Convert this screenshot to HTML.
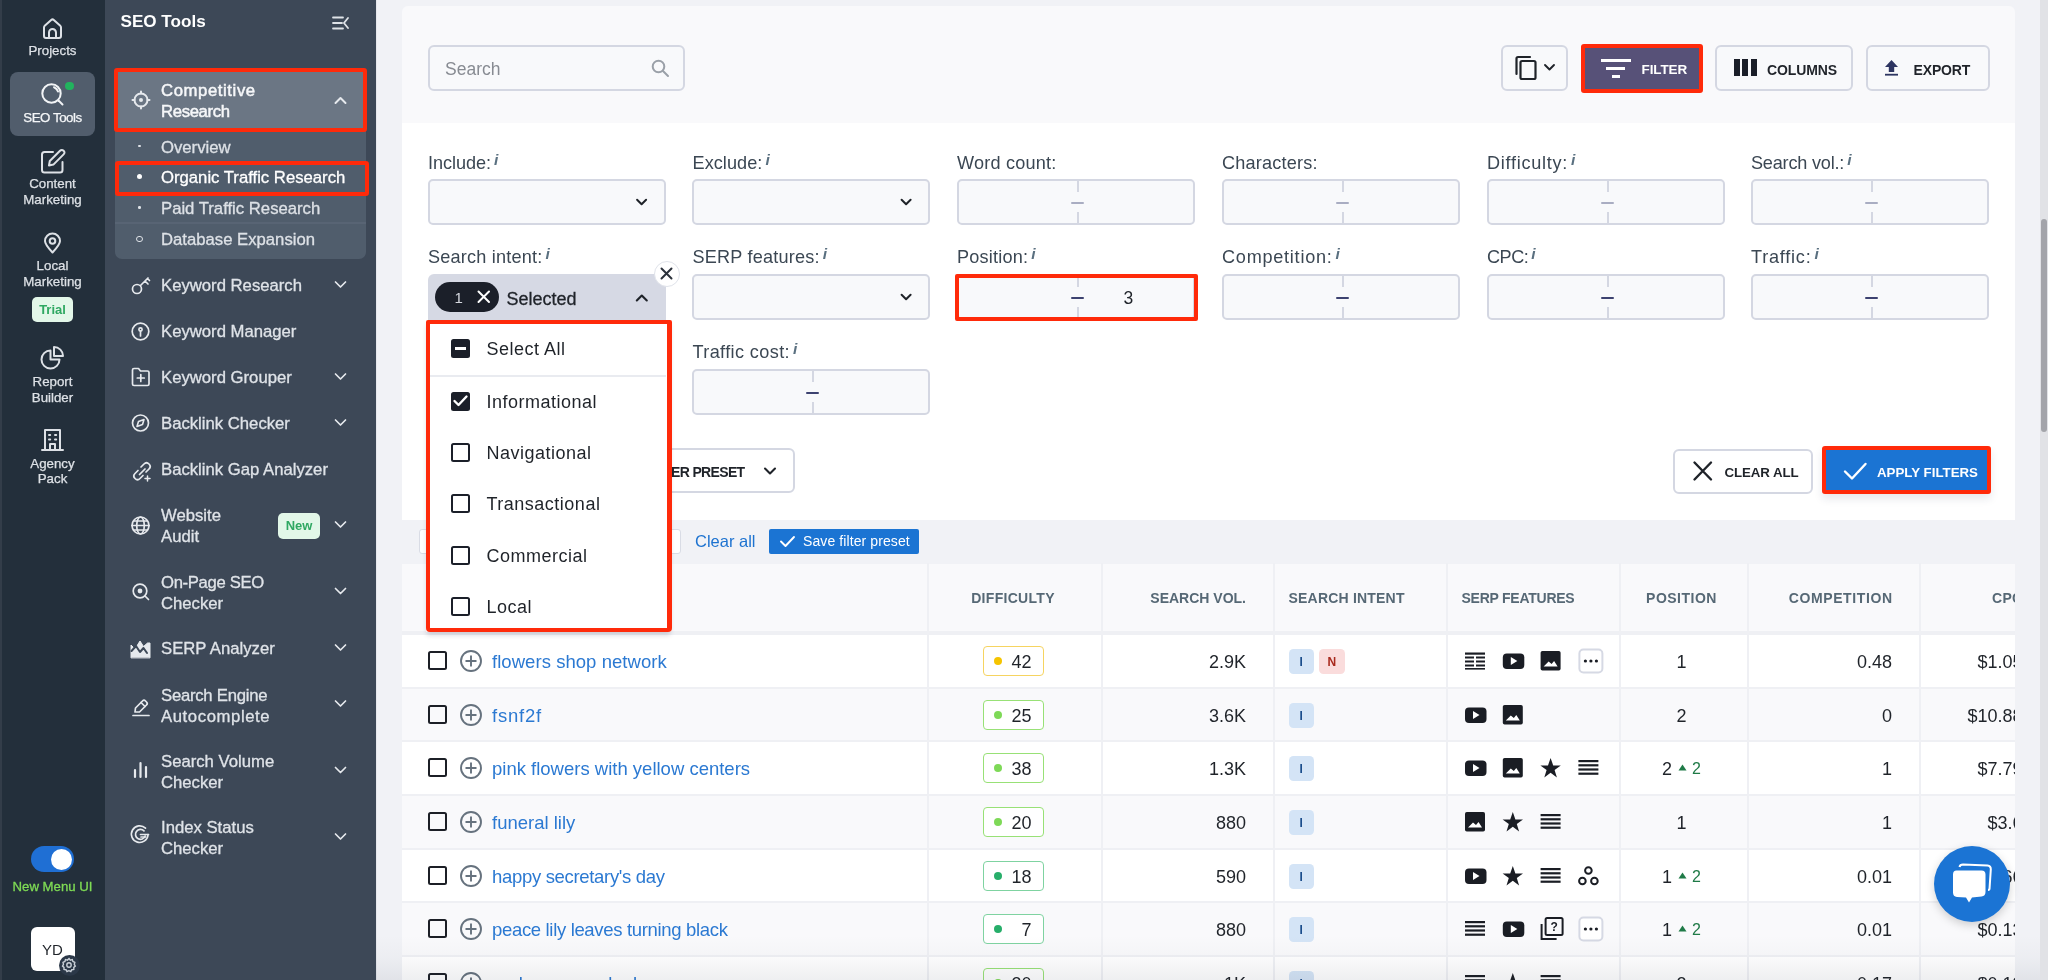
<!DOCTYPE html>
<html><head><meta charset="utf-8">
<style>
*{box-sizing:border-box;margin:0;padding:0}
html,body{width:2048px;height:980px;overflow:hidden;background:#f1f2f6;}
body{will-change:transform;font-family:"Liberation Sans",sans-serif}
.a{position:absolute}
svg{position:absolute;overflow:visible}
/* rail */
#rail{left:0;top:0;width:105px;height:980px;background:#232f3b}
.rl{position:absolute;left:0;width:105px;text-align:center;color:#dde1e6;font-size:13.3px;line-height:15.6px;white-space:nowrap;-webkit-text-stroke:0.25px currentColor}
/* panel */
#panel{left:105px;top:0;width:271px;height:980px;background:#3d4857}
.nv{position:absolute;left:161px;margin-top:2px;color:#dfe3e8;font-size:16.7px;line-height:20.5px;white-space:nowrap;-webkit-text-stroke:0.3px currentColor}
.chev{position:absolute;left:335px;width:11px;height:6px}
/* main */
#card{left:402px;top:6px;width:1613px;height:1000px;background:#fff;border-radius:6px 6px 0 0;overflow:hidden}
.lbl{position:absolute;margin-top:1px;color:#3b4753;font-size:18.1px;letter-spacing:0.2px;white-space:nowrap}
.lbl i{font-style:italic;font-weight:bold;font-size:15.5px;position:absolute;top:-3px;margin-left:3px;color:#5a7080;letter-spacing:0}
.inp{position:absolute;width:238px;height:46px;border:2px solid #d4d7e2;border-radius:5px;background:#f8f9fb}
.rng:before{content:"";position:absolute;left:117.5px;top:0;width:2px;height:11px;background:#d4d7e2}
.rng:after{content:"";position:absolute;left:117.5px;bottom:0;width:2px;height:11.5px;background:#d4d7e2}
.rng b{position:absolute;left:112px;top:21px;width:13px;height:2px;border-radius:1px;background:#3d4270}
.r1 b{background:#a9adc2}
.btn{position:absolute;border:2px solid #d4d7e2;border-radius:6px;background:#f8f9fb;color:#1f2329;font-size:14px;font-weight:bold;white-space:nowrap}
.red{position:absolute;border:4px solid #ff2a0a;border-radius:3px}
.th{position:absolute;top:589px;color:#566875;font-size:14px;font-weight:bold;letter-spacing:0.3px;white-space:nowrap}
.row{position:absolute;left:402px;width:1613px;height:52px}
.sep{position:absolute;top:563px;width:2px;height:430px;background:#eef0f4}
</style></head><body>

<!-- ===== LEFT RAIL ===== -->
<div id="rail" class="a"></div>
<div class="a" style="left:0;top:0;width:2px;height:980px;background:#333d49"></div>


<!-- rail items -->
<svg style="left:0;top:0" width="105" height="980" fill="none" stroke="#dde1e6" stroke-width="2" stroke-linecap="round" stroke-linejoin="round">
  <!-- house -->
  <path d="M44 27.5 Q44 26.5 45 25.6 L51.2 20 Q52.5 18.8 53.8 20 L60 25.6 Q61 26.5 61 27.5 V36 Q61 38 59 38 H46 Q44 38 44 36 Z"/>
  <path d="M49 38 V32.5 A3.5 3.5 0 0 1 56 32.5 V38"/>
</svg>
<div class="a" style="left:10px;top:72px;width:85px;height:64px;background:#515d6c;border-radius:8px"></div>
<svg style="left:0;top:0" width="105" height="200" fill="none" stroke="#f2f4f6" stroke-width="2" stroke-linecap="round">
  <circle cx="51.5" cy="93.5" r="9.2"/>
  <path d="M58.5 100.5 L62.5 104.5"/>
  <path d="M54 87.2 A6.5 6.5 0 0 1 58 91.5"/>
</svg>
<div class="a" style="left:65px;top:81.5px;width:8.6px;height:8.6px;border-radius:50%;background:#22b35e"></div>
<div class="rl" style="top:43px">Projects</div>
<div class="rl" style="top:110.2px;color:#f4f6f8;letter-spacing:-0.45px">SEO Tools</div>
<svg style="left:0;top:0" width="105" height="500" fill="none" stroke="#dde1e6" stroke-width="2" stroke-linecap="round" stroke-linejoin="round">
  <!-- content: square with pencil -->
  <path d="M53 152 H44.5 Q42 152 42 154.5 V170 Q42 172.5 44.5 172.5 H60 Q62.5 172.5 62.5 170 V162"/>
  <path d="M49 165.5 L49.8 161 L60 150.8 Q61.8 149 63.6 150.8 Q65.4 152.6 63.6 154.4 L53.4 164.6 Z"/>
  <!-- local pin -->
  <path d="M52.5 252.5 Q45 244.5 45 241 A7.5 7.5 0 0 1 60 241 Q60 244.5 52.5 252.5 Z"/>
  <circle cx="52.5" cy="241" r="2.8"/>
  <!-- report pie -->
  <path d="M50.5 350.5 A9 9 0 1 0 59.5 359.5 H50.5 Z"/>
  <path d="M54 347 A9 9 0 0 1 63 356 H54 Z"/>
  <!-- agency building -->
  <path d="M42 450 H63"/>
  <path d="M45 450 V430 H60 V450"/>
  <path d="M50 450 V444 H55 V450"/>
  <path d="M49 435 h1.2 M55 435 h1.2 M49 439.5 h1.2 M55 439.5 h1.2" stroke-width="2"/>
</svg>
<div class="rl" style="top:176px">Content<br>Marketing</div>
<div class="rl" style="top:258.4px">Local<br>Marketing</div>
<div class="a" style="left:32px;top:297px;width:41px;height:25px;border-radius:5px;background:#e3f7e9;color:#2fa862;font-size:13px;font-weight:bold;text-align:center;line-height:25px">Trial</div>
<div class="rl" style="top:374px">Report<br>Builder</div>
<div class="rl" style="top:455.6px">Agency<br>Pack</div>
<!-- toggle -->
<div class="a" style="left:30.5px;top:846px;width:43.5px;height:26px;border-radius:13px;background:#1f6fd4"></div>
<div class="a" style="left:51px;top:848.5px;width:21px;height:21px;border-radius:50%;background:#fff"></div>
<div class="a" style="left:0;top:878.8px;width:105px;text-align:center;color:#7fdc55;font-size:13.2px;line-height:15.6px;-webkit-text-stroke:0.3px #7fdc55;white-space:nowrap">New Menu UI</div>
<!-- avatar -->
<div class="a" style="left:30.5px;top:926.5px;width:44px;height:44px;border-radius:6px;background:#fff;color:#1f2329;font-size:15px;text-align:center;line-height:46px">YD</div>
<div class="a" style="left:58.5px;top:954.5px;width:21px;height:21px;border-radius:50%;background:#2b3848"></div>
<svg style="left:0;top:0" width="105" height="980" fill="none" stroke="#c9d0d8" stroke-width="1.4">
  <circle cx="69" cy="965" r="2.2"/>
  <path d="M69 958.5 l1.3 1.6 2-0.6 0.6 2 1.9 0.9 -0.5 2 1 1.7 -1.5 1.3 0 2 -2 0.3 -1 1.8 -1.9-0.8 -1.9 0.8 -1-1.8 -2-0.3 0-2 -1.5-1.3 1-1.7 -0.5-2 1.9-0.9 0.6-2 2 0.6 Z"/>
</svg>


<!-- ===== PANEL ===== -->
<div id="panel" class="a"></div>
<div class="a" style="left:120.5px;top:12px;color:#fff;font-size:17.1px;font-weight:bold;white-space:nowrap">SEO Tools</div>
<svg style="left:0;top:0" width="380" height="60" fill="none" stroke="#dfe3e8" stroke-width="1.8" stroke-linecap="round">
  <path d="M333 17.5 H343 M333 23 H342 M333 28.5 H343 M348 18 L344 23 L348 28"/>
</svg>
<!-- competitive research -->
<div class="a" style="left:115px;top:131px;width:251px;height:128px;background:#505d6c;border-radius:0 0 7px 7px"></div>
<div class="a" style="left:117px;top:71px;width:247px;height:57px;background:#6b7684"></div>
<div class="red" style="left:113.5px;top:67.5px;width:253px;height:64px"></div>
<div class="a" style="left:115px;top:222px;width:251px;height:1.5px;background:#586474"></div>
<svg style="left:0;top:0" width="380" height="980" fill="none" stroke="#e6e9ed" stroke-width="2" stroke-linecap="round" stroke-linejoin="round">
  <circle cx="141" cy="100" r="6.5"/>
  <circle cx="141" cy="100" r="2" fill="#e6e9ed" stroke="none"/>
  <path d="M141 91.5 V93.5 M141 106.5 V108.5 M132.5 100 H134.5 M147.5 100 H149.5"/>
  <path d="M335.5 103 L340.5 98 L345.5 103"/>
</svg>
<div class="nv" style="top:79px;color:#f6f7f9;-webkit-text-stroke:0.5px #f6f7f9"><span style="letter-spacing:0.6px">Competitive</span><br><span style="letter-spacing:-0.35px">Research</span></div>
<div class="a" style="left:138.2px;top:144.6px;width:2.4px;height:2.4px;border-radius:50%;background:#dfe3e8"></div>
<div class="nv" style="top:136px;color:#dde1e6">Overview</div>
<div class="red" style="left:114.7px;top:161.4px;width:254px;height:35px"></div>
<div class="a" style="left:137px;top:174.2px;width:5px;height:5px;border-radius:50%;background:#fff"></div>
<div class="nv" style="top:166px;color:#fff">Organic Traffic Research</div>
<div class="a" style="left:138.2px;top:206.4px;width:2.4px;height:2.4px;border-radius:50%;background:#dfe3e8"></div>
<div class="nv" style="top:197px;color:#dde1e6">Paid Traffic Research</div>
<div class="a" style="left:136px;top:235.5px;width:6.5px;height:6.5px;border-radius:50%;border:1.4px solid #dfe3e8"></div>
<div class="nv" style="top:228px;color:#dde1e6">Database Expansion</div>

<div class="nv" style="top:274px">Keyword Research</div>
<div class="nv" style="top:320px">Keyword Manager</div>
<div class="nv" style="top:366px">Keyword Grouper</div>
<div class="nv" style="top:412px">Backlink Checker</div>
<div class="nv" style="top:458px">Backlink Gap Analyzer</div>
<div class="nv" style="top:504px">Website<br>Audit</div>
<div class="a" style="left:278px;top:513px;width:42px;height:25.5px;border-radius:5px;background:#e2f7e8;color:#2fa862;font-size:13px;font-weight:bold;text-align:center;line-height:25.5px">New</div>
<div class="nv" style="top:571px"><span style="letter-spacing:-0.35px">On-Page SEO</span><br>Checker</div>
<div class="nv" style="top:637px">SERP Analyzer</div>
<div class="nv" style="top:684px"><span style="letter-spacing:-0.25px">Search Engine</span><br><span style="letter-spacing:0.6px">Autocomplete</span></div>
<div class="nv" style="top:750px">Search Volume<br>Checker</div>
<div class="nv" style="top:816px">Index Status<br>Checker</div>

<svg style="left:0;top:0" width="380" height="980" fill="none" stroke="#e6e9ed" stroke-width="1.7" stroke-linecap="round" stroke-linejoin="round">
  <!-- chevrons down -->
  <path d="M335.5 282 L340.5 287 L345.5 282"/>
  <path d="M335.5 374 L340.5 379 L345.5 374"/>
  <path d="M335.5 420 L340.5 425 L345.5 420"/>
  <path d="M335.5 522 L340.5 527 L345.5 522"/>
  <path d="M335.5 588.5 L340.5 593.5 L345.5 588.5"/>
  <path d="M335.5 645 L340.5 650 L345.5 645"/>
  <path d="M335.5 701 L340.5 706 L345.5 701"/>
  <path d="M335.5 767.5 L340.5 772.5 L345.5 767.5"/>
  <path d="M335.5 834 L340.5 839 L345.5 834"/>
  <!-- key -->
  <circle cx="137" cy="289" r="4.5"/>
  <path d="M140.5 285.5 L148 278 M145 281 L148 284 M147.5 278.5 L149.5 280.5"/>
  <!-- keyword manager -->
  <circle cx="140.5" cy="331.5" r="8.3"/>
  <circle cx="140.5" cy="329.5" r="1.6"/>
  <path d="M140.5 331 V336"/>
  <!-- grouper folder -->
  <path d="M132.5 370 Q132.5 368.5 134 368.5 H138.5 L140.5 371 H147.5 Q149 371 149 372.5 V384 Q149 385.5 147.5 385.5 H134 Q132.5 385.5 132.5 384 Z"/>
  <path d="M140.8 374.5 V381.5 M137.3 378 H144.3"/>
  <!-- backlink checker compass -->
  <circle cx="140.5" cy="423" r="8"/>
  <path d="M137 426.5 L138.5 421.5 L144 419.5 L142.5 424.5 Z" stroke-width="1.6"/>
  <!-- gap analyzer link -->
  <path d="M138 470.5 L135 473.5 Q132.5 476 135 478.5 Q137.5 481 140 478.5 L143 475.5"/>
  <path d="M141 467 L144 464 Q146.5 461.5 149 464 Q151.5 466.5 149 469 L146 472"/>
  <path d="M139.5 474.5 L145 469"/>
  <path d="M147.5 476 V481 M145 478.5 H150" stroke-width="1.5"/>
  <!-- globe -->
  <circle cx="140.5" cy="525.5" r="8.5"/>
  <path d="M132 525.5 H149 M133.5 521 H147.5 M133.5 530 H147.5"/>
  <ellipse cx="140.5" cy="525.5" rx="3.8" ry="8.5"/>
  <!-- on-page seo -->
  <circle cx="140" cy="591" r="6.8"/>
  <circle cx="140" cy="591" r="2.4" fill="#e6e9ed" stroke="none"/>
  <path d="M145 596 L148.5 599.5"/>
  <!-- serp analyzer -->
  <path d="M131 657.5 V645 L135 649 L140 641 L143.5 646.5 L147.5 643 H150 V657.5 Z" fill="#e6e9ed" stroke-width="1"/>
  <path d="M131.5 651 L136 646 L140 652 L143.5 648 L147 653" stroke="#3d4857" stroke-width="2"/>
  <!-- search engine autocomplete pencil -->
  <path d="M133 715.5 H149"/>
  <path d="M135 712 L135.5 708 L142.5 701 Q144 699.5 145.5 701 L146.5 702 Q148 703.5 146.5 705 L139.5 712 Z"/>
  <path d="M141 702.5 L145 706.5"/>
  <!-- search volume bars -->
  <path d="M135 770 V777 M140.5 763 V777 M146 767 V777" stroke-width="2.2"/>
  <!-- google G -->
  <path d="M148 834.5 A8.3 8.3 0 1 1 145.5 828.2"/>
  <path d="M145.2 836 A5 5 0 1 1 144 830.8"/>
  <path d="M140.5 834.5 H148.5 M141 837 H145.5"/>
</svg>


<!-- ===== MAIN ===== -->
<div class="a" style="left:376px;top:0;width:1px;height:980px;background:#e6e7ec"></div>
<div class="a" style="left:402px;top:6px;width:1613px;height:117px;background:#f9f9fb;border-radius:6px 6px 0 0"></div>
<div class="a" style="left:402px;top:123px;width:1613px;height:397px;background:#fff"></div>
<!-- scrollbar -->
<div class="a" style="left:2040px;top:0;width:8px;height:980px;background:#e1e2e6"></div>
<div class="a" style="left:2041px;top:219px;width:6px;height:213px;border-radius:3px;background:#a3a4aa"></div>

<!-- search -->
<div class="a" style="left:428px;top:45px;width:257px;height:46px;border:2px solid #d4d7e2;border-radius:6px;background:#f8f9fb"></div>
<div class="a" style="left:445px;top:60.4px;color:#878b92;font-size:17.5px;line-height:18px">Search</div>
<svg style="left:0;top:0" width="2048" height="140" fill="none" stroke="#9aa0a8" stroke-width="2" stroke-linecap="round">
  <circle cx="658.5" cy="66.5" r="5.8"/>
  <path d="M663 71 L668 76"/>
</svg>
<!-- copy btn -->
<div class="btn" style="left:1501px;top:45px;width:67px;height:46px"></div>
<svg style="left:0;top:0" width="2048" height="140" fill="none" stroke="#1f2329" stroke-width="2.2" stroke-linecap="round" stroke-linejoin="round">
  <path d="M1516.5 74 V58.5 Q1516.5 57 1518 57 H1530"/>
  <rect x="1520.5" y="61" width="15" height="18" rx="1.6"/>
  <path d="M1545 65 L1549.5 69.5 L1554 65" stroke-width="1.9"/>
</svg>
<!-- filter btn -->
<div class="a" style="left:1581px;top:44px;width:122px;height:48.5px;background:#575178;border:4px solid #ff2a0a;border-radius:3px"></div>
<div class="a" style="left:1601px;top:58.5px;width:29.5px;height:3.5px;background:#fff"></div>
<div class="a" style="left:1606px;top:66.5px;width:19px;height:3.5px;background:#fff"></div>
<div class="a" style="left:1612px;top:74.5px;width:8px;height:3.5px;background:#fff"></div>
<div class="a" style="left:1641.5px;top:62.5px;color:#fff;font-size:13.5px;font-weight:bold;line-height:14px;letter-spacing:-0.1px">FILTER</div>
<!-- columns -->
<div class="btn" style="left:1715px;top:45px;width:137.5px;height:46px"></div>
<div class="a" style="left:1734px;top:59px;width:6px;height:16.5px;background:#1a1e28"></div>
<div class="a" style="left:1742px;top:59px;width:6px;height:16.5px;background:#1a1e28"></div>
<div class="a" style="left:1750.5px;top:59px;width:6px;height:16.5px;background:#1a1e28"></div>
<div class="a" style="left:1767px;top:62.5px;color:#1f2329;font-size:14px;font-weight:bold;line-height:14px;letter-spacing:-0.1px">COLUMNS</div>
<!-- export -->
<div class="btn" style="left:1866px;top:45px;width:123.5px;height:46px"></div>
<svg style="left:0;top:0" width="2048" height="140">
  <path d="M1891.5 60 L1898 67 H1894.2 V72 H1888.8 V67 H1885 Z" fill="#2d3561"/>
  <rect x="1885" y="73.8" width="13" height="1.8" fill="#2d3561"/>
</svg>
<div class="a" style="left:1913.5px;top:62.5px;color:#1f2329;font-size:14px;font-weight:bold;line-height:14px;letter-spacing:-0.15px">EXPORT</div>

<!-- filters -->
<div class="lbl" style="left:428px;top:153.1px;line-height:18.4px;letter-spacing:-0.04px">Include:<i>i</i></div>
<div class="inp" style="left:428px;top:179px"></div>
<svg style="left:0;top:0" width="2048" height="500" fill="none" stroke="#1f2329" stroke-width="2" stroke-linecap="round" stroke-linejoin="round"><path d="M637.1 199.8 L641.6 204.2 L646.1 199.8"/></svg>
<div class="lbl" style="left:692.5px;top:153.1px;line-height:18.4px;letter-spacing:0.06px">Exclude:<i>i</i></div>
<div class="inp" style="left:692px;top:179px"></div>
<svg style="left:0;top:0" width="2048" height="500" fill="none" stroke="#1f2329" stroke-width="2" stroke-linecap="round" stroke-linejoin="round"><path d="M901.6 199.8 L906.1 204.2 L910.6 199.8"/></svg>
<div class="lbl" style="left:957px;top:153.1px;line-height:18.4px">Word count:</div>
<div class="inp rng r1" style="left:957px;top:179px"><b></b></div>
<div class="lbl" style="left:1222px;top:153.1px;line-height:18.4px">Characters:</div>
<div class="inp rng r1" style="left:1222px;top:179px"><b></b></div>
<div class="lbl" style="left:1487px;top:153.1px;line-height:18.4px;letter-spacing:0.72px">Difficulty:<i>i</i></div>
<div class="inp rng r1" style="left:1487px;top:179px"><b></b></div>
<div class="lbl" style="left:1751px;top:153.1px;line-height:18.4px;letter-spacing:-0.2px">Search vol.:<i>i</i></div>
<div class="inp rng r1" style="left:1751px;top:179px"><b></b></div>
<div class="lbl" style="left:428px;top:247.4px;line-height:18.4px">Search intent:<i>i</i></div>
<div class="lbl" style="left:692.5px;top:247.4px;line-height:18.4px">SERP features:<i>i</i></div>
<div class="inp" style="left:692px;top:274px"></div>
<svg style="left:0;top:0" width="2048" height="500" fill="none" stroke="#1f2329" stroke-width="2" stroke-linecap="round" stroke-linejoin="round"><path d="M901.6 294.8 L906.1 299.2 L910.6 294.8"/></svg>
<div class="lbl" style="left:957px;top:247.4px;line-height:18.4px">Position:<i>i</i></div>
<div class="lbl" style="left:1222px;top:247.4px;line-height:18.4px;letter-spacing:0.75px">Competition:<i>i</i></div>
<div class="inp rng" style="left:1222px;top:274px"><b></b></div>
<div class="lbl" style="left:1487px;top:247.4px;line-height:18.4px;letter-spacing:-0.5px">CPC:<i>i</i></div>
<div class="inp rng" style="left:1487px;top:274px"><b></b></div>
<div class="lbl" style="left:1751px;top:247.4px;line-height:18.4px;letter-spacing:0.77px">Traffic:<i>i</i></div>
<div class="inp rng" style="left:1751px;top:274px"><b></b></div>
<div class="lbl" style="left:692.5px;top:342.0px;line-height:18.4px;letter-spacing:0.38px">Traffic cost:<i>i</i></div>
<div class="inp rng" style="left:692px;top:369px"><b></b></div>
<!-- position box -->
<div class="inp rng" style="left:957px;top:274px"><b></b></div>
<div class="a" style="left:1123.5px;top:290px;color:#1f2329;font-size:17.5px;line-height:17.5px">3</div>
<div class="red" style="left:955px;top:273.5px;width:242.5px;height:47.5px;border-radius:2px"></div>
<!-- preset btn -->
<div class="btn" style="left:430px;top:448.4px;width:364.5px;height:45px;background:#fff"></div>
<div class="a" style="left:544px;top:464.7px;width:200.5px;text-align:right;color:#1f2329;font-size:14px;font-weight:bold;line-height:14px;letter-spacing:-0.65px">SAVED FILTER PRESET</div>
<svg style="left:0;top:0" width="2048" height="520" fill="none" stroke="#1f2329" stroke-width="2.1" stroke-linecap="round" stroke-linejoin="round"><path d="M765 468.5 L770 473.5 L775 468.5"/></svg>
<!-- clear all -->
<div class="btn" style="left:1673px;top:448.5px;width:139.5px;height:45px;background:#fff"></div>
<svg style="left:0;top:0" width="2048" height="520" fill="none" stroke="#1f2329" stroke-width="2.4" stroke-linecap="round"><path d="M1694.5 462.5 L1711 479.5 M1711 462.5 L1694.5 479.5"/></svg>
<div class="a" style="left:1724.5px;top:465.5px;color:#1f2329;font-size:13.3px;letter-spacing:-0.1px;font-weight:bold;line-height:14px">CLEAR ALL</div>
<!-- apply -->
<div class="a" style="left:1822px;top:446px;width:168.5px;height:48px;background:#1b74d3;border:4px solid #ff2a0a;border-radius:3px;box-shadow:0 5px 9px rgba(30,40,80,0.10)"></div>
<svg style="left:0;top:0" width="2048" height="520" fill="none" stroke="#fff" stroke-width="2.4" stroke-linecap="round" stroke-linejoin="round"><path d="M1845 471.5 L1852 478.5 L1865.5 464"/></svg>
<div class="a" style="left:1877px;top:465.5px;color:#fff;font-size:13.3px;font-weight:bold;line-height:14px">APPLY FILTERS</div>

<!-- table -->

<!-- chip bar -->
<div class="a" style="left:419px;top:529px;width:262px;height:24.5px;background:#fff;border:1px solid #d9dce5;border-radius:3px"></div>
<div class="a" style="left:695px;top:533px;color:#1e73d0;font-size:16.5px;line-height:17px">Clear all</div>
<div class="a" style="left:769px;top:529px;width:150px;height:25px;background:#1b74d3;border-radius:2px"></div>
<svg style="left:0;top:0" width="2048" height="600" fill="none" stroke="#fff" stroke-width="1.9" stroke-linecap="round" stroke-linejoin="round"><path d="M781 541.5 L785.5 546 L794 537"/></svg>
<div class="a" style="left:803px;top:534px;color:#fff;font-size:14px;line-height:15px;letter-spacing:0.1px">Save filter preset</div>
<!-- table header -->
<div class="a" style="left:402px;top:563.5px;width:1613px;height:67.5px;background:#f9f9fb"></div>

<div class="a" style="left:402px;top:631px;width:1613px;height:4px;background:#eff0f4"></div>
<div class="a" style="left:402px;top:635px;width:1613px;height:52px;background:#fff"></div>
<div class="a" style="left:402px;top:687px;width:1613px;height:2px;background:#eff0f4"></div>
<div class="a" style="left:402px;top:689px;width:1613px;height:52px;background:#f9f9fb"></div>
<div class="a" style="left:402px;top:740px;width:1613px;height:2px;background:#eff0f4"></div>
<div class="a" style="left:402px;top:742px;width:1613px;height:52px;background:#fff"></div>
<div class="a" style="left:402px;top:794px;width:1613px;height:2px;background:#eff0f4"></div>
<div class="a" style="left:402px;top:796px;width:1613px;height:52px;background:#f9f9fb"></div>
<div class="a" style="left:402px;top:848px;width:1613px;height:2px;background:#eff0f4"></div>
<div class="a" style="left:402px;top:850px;width:1613px;height:52px;background:#fff"></div>
<div class="a" style="left:402px;top:901px;width:1613px;height:2px;background:#eff0f4"></div>
<div class="a" style="left:402px;top:903px;width:1613px;height:52px;background:#f9f9fb"></div>
<div class="a" style="left:402px;top:955px;width:1613px;height:2px;background:#eff0f4"></div>
<div class="a" style="left:402px;top:957px;width:1613px;height:30px;background:#fff"></div>
<div class="a" style="left:927px;top:563px;width:2px;height:417px;background:#eff0f4"></div>
<div class="a" style="left:1100.5px;top:563px;width:2px;height:417px;background:#eff0f4"></div>
<div class="a" style="left:1273px;top:563px;width:2px;height:417px;background:#eff0f4"></div>
<div class="a" style="left:1446px;top:563px;width:2px;height:417px;background:#eff0f4"></div>
<div class="a" style="left:1619px;top:563px;width:2px;height:417px;background:#eff0f4"></div>
<div class="a" style="left:1747px;top:563px;width:2px;height:417px;background:#eff0f4"></div>
<div class="a" style="left:1919px;top:563px;width:2px;height:417px;background:#eff0f4"></div>
<div class="th" style="left:863px;width:300px;text-align:center;top:590.9px;line-height:14px">DIFFICULTY</div>
<div class="th" style="left:946px;width:300px;text-align:right;top:590.9px;line-height:14px;letter-spacing:0px">SEARCH VOL.</div>
<div class="th" style="left:1288.5px;top:590.9px;line-height:14px;letter-spacing:0.2px">SEARCH INTENT</div>
<div class="th" style="left:1461.5px;top:590.9px;line-height:14px;letter-spacing:-0.25px">SERP FEATURES</div>
<div class="th" style="left:1531.5px;width:300px;text-align:center;top:590.9px;line-height:14px;letter-spacing:0.5px">POSITION</div>
<div class="th" style="left:1592.6px;width:300px;text-align:right;top:590.9px;line-height:14px;letter-spacing:0.6px">COMPETITION</div>
<div class="th" style="left:1992px;top:590.9px;line-height:14px">CPC</div>
<div class="a" style="left:427.8px;top:650.7px;width:19px;height:19px;border:2.4px solid #1c1f26;border-radius:2.5px"></div>
<div class="a" style="left:492px;top:651.5px;color:#2b79d2;font-size:18.5px;line-height:19px;white-space:nowrap;letter-spacing:0.05px">flowers shop network</div>
<div class="a" style="left:982.5px;top:646px;width:61.5px;height:30px;border:1.6px solid #f6d461;border-radius:4px;background:#fff"></div>
<div class="a" style="left:994px;top:657px;width:8px;height:8px;border-radius:50%;background:#f5c400"></div>
<div class="a" style="left:1003.5px;top:652.5px;width:28px;text-align:right;color:#1f2329;font-size:18px;line-height:18px">42</div>
<div class="a" style="left:1046px;top:652.5px;width:200px;text-align:right;color:#1f2329;font-size:18px;line-height:18px">2.9K</div>
<div class="a" style="left:1288.5px;top:648.5px;width:25.5px;height:25.5px;border-radius:4.5px;background:#d4e4f6;color:#1b4d8c;font-size:12px;font-weight:bold;text-align:center;line-height:26px">I</div>
<div class="a" style="left:1319.0px;top:648.5px;width:25.5px;height:25.5px;border-radius:4.5px;background:#fadcdc;color:#a8291d;font-size:12px;font-weight:bold;text-align:center;line-height:26px">N</div>
<div class="a" style="left:1581.5px;top:652.5px;width:200px;text-align:center;color:#1f2329;font-size:18px;line-height:18px">1</div>
<div class="a" style="left:1692px;top:652.5px;width:200px;text-align:right;color:#1f2329;font-size:18px;line-height:18px">0.48</div>
<div class="a" style="left:1822.5px;top:652.5px;width:200px;text-align:right;color:#1f2329;font-size:18px;line-height:18px;white-space:nowrap">$1.05</div>
<div class="a" style="left:427.8px;top:704.7px;width:19px;height:19px;border:2.4px solid #1c1f26;border-radius:2.5px"></div>
<div class="a" style="left:492px;top:705.5px;color:#2b79d2;font-size:18.5px;line-height:19px;white-space:nowrap;letter-spacing:0.8px">fsnf2f</div>
<div class="a" style="left:982.5px;top:700px;width:61.5px;height:30px;border:1.6px solid #98e176;border-radius:4px;background:#fff"></div>
<div class="a" style="left:994px;top:711px;width:8px;height:8px;border-radius:50%;background:#7ed957"></div>
<div class="a" style="left:1003.5px;top:706.5px;width:28px;text-align:right;color:#1f2329;font-size:18px;line-height:18px">25</div>
<div class="a" style="left:1046px;top:706.5px;width:200px;text-align:right;color:#1f2329;font-size:18px;line-height:18px">3.6K</div>
<div class="a" style="left:1288.5px;top:702.5px;width:25.5px;height:25.5px;border-radius:4.5px;background:#d4e4f6;color:#1b4d8c;font-size:12px;font-weight:bold;text-align:center;line-height:26px">I</div>
<div class="a" style="left:1581.5px;top:706.5px;width:200px;text-align:center;color:#1f2329;font-size:18px;line-height:18px">2</div>
<div class="a" style="left:1692px;top:706.5px;width:200px;text-align:right;color:#1f2329;font-size:18px;line-height:18px">0</div>
<div class="a" style="left:1822.5px;top:706.5px;width:200px;text-align:right;color:#1f2329;font-size:18px;line-height:18px;white-space:nowrap">$10.88</div>
<div class="a" style="left:427.8px;top:757.7px;width:19px;height:19px;border:2.4px solid #1c1f26;border-radius:2.5px"></div>
<div class="a" style="left:492px;top:758.5px;color:#2b79d2;font-size:18.5px;line-height:19px;white-space:nowrap">pink flowers with yellow centers</div>
<div class="a" style="left:982.5px;top:753px;width:61.5px;height:30px;border:1.6px solid #98e176;border-radius:4px;background:#fff"></div>
<div class="a" style="left:994px;top:764px;width:8px;height:8px;border-radius:50%;background:#7ed957"></div>
<div class="a" style="left:1003.5px;top:759.5px;width:28px;text-align:right;color:#1f2329;font-size:18px;line-height:18px">38</div>
<div class="a" style="left:1046px;top:759.5px;width:200px;text-align:right;color:#1f2329;font-size:18px;line-height:18px">1.3K</div>
<div class="a" style="left:1288.5px;top:755.5px;width:25.5px;height:25.5px;border-radius:4.5px;background:#d4e4f6;color:#1b4d8c;font-size:12px;font-weight:bold;text-align:center;line-height:26px">I</div>
<div class="a" style="left:1662px;top:759.5px;color:#1f2329;font-size:18px;line-height:18px">2</div>
<div class="a" style="left:1692px;top:760.5px;color:#1f7a47;font-size:16px;line-height:16px">2</div>
<div class="a" style="left:1692px;top:759.5px;width:200px;text-align:right;color:#1f2329;font-size:18px;line-height:18px">1</div>
<div class="a" style="left:1822.5px;top:759.5px;width:200px;text-align:right;color:#1f2329;font-size:18px;line-height:18px;white-space:nowrap">$7.79</div>
<div class="a" style="left:427.8px;top:811.7px;width:19px;height:19px;border:2.4px solid #1c1f26;border-radius:2.5px"></div>
<div class="a" style="left:492px;top:812.5px;color:#2b79d2;font-size:18.5px;line-height:19px;white-space:nowrap">funeral lily</div>
<div class="a" style="left:982.5px;top:807px;width:61.5px;height:30px;border:1.6px solid #98e176;border-radius:4px;background:#fff"></div>
<div class="a" style="left:994px;top:818px;width:8px;height:8px;border-radius:50%;background:#7ed957"></div>
<div class="a" style="left:1003.5px;top:813.5px;width:28px;text-align:right;color:#1f2329;font-size:18px;line-height:18px">20</div>
<div class="a" style="left:1046px;top:813.5px;width:200px;text-align:right;color:#1f2329;font-size:18px;line-height:18px">880</div>
<div class="a" style="left:1288.5px;top:809.5px;width:25.5px;height:25.5px;border-radius:4.5px;background:#d4e4f6;color:#1b4d8c;font-size:12px;font-weight:bold;text-align:center;line-height:26px">I</div>
<div class="a" style="left:1581.5px;top:813.5px;width:200px;text-align:center;color:#1f2329;font-size:18px;line-height:18px">1</div>
<div class="a" style="left:1692px;top:813.5px;width:200px;text-align:right;color:#1f2329;font-size:18px;line-height:18px">1</div>
<div class="a" style="left:1822.5px;top:813.5px;width:200px;text-align:right;color:#1f2329;font-size:18px;line-height:18px;white-space:nowrap">$3.6</div>
<div class="a" style="left:427.8px;top:865.7px;width:19px;height:19px;border:2.4px solid #1c1f26;border-radius:2.5px"></div>
<div class="a" style="left:492px;top:866.5px;color:#2b79d2;font-size:18.5px;line-height:19px;white-space:nowrap;letter-spacing:-0.32px">happy secretary's day</div>
<div class="a" style="left:982.5px;top:861px;width:61.5px;height:30px;border:1.6px solid #7fd3a1;border-radius:4px;background:#fff"></div>
<div class="a" style="left:994px;top:872px;width:8px;height:8px;border-radius:50%;background:#27ae6a"></div>
<div class="a" style="left:1003.5px;top:867.5px;width:28px;text-align:right;color:#1f2329;font-size:18px;line-height:18px">18</div>
<div class="a" style="left:1046px;top:867.5px;width:200px;text-align:right;color:#1f2329;font-size:18px;line-height:18px">590</div>
<div class="a" style="left:1288.5px;top:863.5px;width:25.5px;height:25.5px;border-radius:4.5px;background:#d4e4f6;color:#1b4d8c;font-size:12px;font-weight:bold;text-align:center;line-height:26px">I</div>
<div class="a" style="left:1662px;top:867.5px;color:#1f2329;font-size:18px;line-height:18px">1</div>
<div class="a" style="left:1692px;top:868.5px;color:#1f7a47;font-size:16px;line-height:16px">2</div>
<div class="a" style="left:1692px;top:867.5px;width:200px;text-align:right;color:#1f2329;font-size:18px;line-height:18px">0.01</div>
<div class="a" style="left:1822.5px;top:867.5px;width:200px;text-align:right;color:#1f2329;font-size:18px;line-height:18px;white-space:nowrap">$3.66</div>
<div class="a" style="left:427.8px;top:918.7px;width:19px;height:19px;border:2.4px solid #1c1f26;border-radius:2.5px"></div>
<div class="a" style="left:492px;top:919.5px;color:#2b79d2;font-size:18.5px;line-height:19px;white-space:nowrap;letter-spacing:-0.33px">peace lily leaves turning black</div>
<div class="a" style="left:982.5px;top:914px;width:61.5px;height:30px;border:1.6px solid #7fd3a1;border-radius:4px;background:#fff"></div>
<div class="a" style="left:994px;top:925px;width:8px;height:8px;border-radius:50%;background:#27ae6a"></div>
<div class="a" style="left:1003.5px;top:920.5px;width:28px;text-align:right;color:#1f2329;font-size:18px;line-height:18px">7</div>
<div class="a" style="left:1046px;top:920.5px;width:200px;text-align:right;color:#1f2329;font-size:18px;line-height:18px">880</div>
<div class="a" style="left:1288.5px;top:916.5px;width:25.5px;height:25.5px;border-radius:4.5px;background:#d4e4f6;color:#1b4d8c;font-size:12px;font-weight:bold;text-align:center;line-height:26px">I</div>
<div class="a" style="left:1662px;top:920.5px;color:#1f2329;font-size:18px;line-height:18px">1</div>
<div class="a" style="left:1692px;top:921.5px;color:#1f7a47;font-size:16px;line-height:16px">2</div>
<div class="a" style="left:1692px;top:920.5px;width:200px;text-align:right;color:#1f2329;font-size:18px;line-height:18px">0.01</div>
<div class="a" style="left:1822.5px;top:920.5px;width:200px;text-align:right;color:#1f2329;font-size:18px;line-height:18px;white-space:nowrap">$0.13</div>
<div class="a" style="left:427.8px;top:972.7px;width:19px;height:19px;border:2.4px solid #1c1f26;border-radius:2.5px"></div>
<div class="a" style="left:492px;top:973.5px;color:#2b79d2;font-size:18.5px;line-height:19px;white-space:nowrap">earl ear swan leal</div>
<div class="a" style="left:982.5px;top:968px;width:61.5px;height:30px;border:1.6px solid #98e176;border-radius:4px;background:#fff"></div>
<div class="a" style="left:994px;top:979px;width:8px;height:8px;border-radius:50%;background:#7ed957"></div>
<div class="a" style="left:1003.5px;top:974.5px;width:28px;text-align:right;color:#1f2329;font-size:18px;line-height:18px">30</div>
<div class="a" style="left:1046px;top:974.5px;width:200px;text-align:right;color:#1f2329;font-size:18px;line-height:18px">1K</div>
<div class="a" style="left:1288.5px;top:970.5px;width:25.5px;height:25.5px;border-radius:4.5px;background:#d4e4f6;color:#1b4d8c;font-size:12px;font-weight:bold;text-align:center;line-height:26px">I</div>
<div class="a" style="left:1581.5px;top:974.5px;width:200px;text-align:center;color:#1f2329;font-size:18px;line-height:18px">2</div>
<div class="a" style="left:1692px;top:974.5px;width:200px;text-align:right;color:#1f2329;font-size:18px;line-height:18px">0.17</div>
<div class="a" style="left:1822.5px;top:974.5px;width:200px;text-align:right;color:#1f2329;font-size:18px;line-height:18px;white-space:nowrap">$0.13</div>
<svg style="left:0;top:0" width="2048" height="980">
<g fill="none" stroke="#66727e" stroke-width="1.9"><circle cx="471" cy="661" r="10"/><path d="M465.5 661 H476.5 M471 655.5 V666.5"/></g>
<g fill="#1a1d24"><rect x="1465" y="652.5" width="20" height="2.2"/><rect x="1465" y="656.5" width="9" height="2"/><rect x="1476" y="656.5" width="9" height="2"/><rect x="1465" y="660.5" width="9" height="2"/><rect x="1476" y="660.5" width="9" height="2"/><rect x="1465" y="664.5" width="9" height="2"/><rect x="1476" y="664.5" width="9" height="2"/><rect x="1465" y="668" width="20" height="1.6"/></g>
<rect x="1502.8" y="653.5" width="21.5" height="15.5" rx="4" fill="#1a1d24"/><path d="M1510.8 657 L1517.3 661 L1510.8 665 Z" fill="#fff"/>
<rect x="1540.6" y="651" width="20" height="19.5" rx="1.8" fill="#1a1d24"/><path d="M1543.6 666.5 L1548.6 661.5 L1551.6 664 L1554.1 661 L1557.6 666.5 Z" fill="#fff"/>
<rect x="1579.3999999999999" y="649.5" width="23" height="23" rx="4" fill="#fff" stroke="#d6d9e4" stroke-width="2"/><circle cx="1585.3999999999999" cy="661" r="1.6" fill="#1a1d24"/><circle cx="1590.8999999999999" cy="661" r="1.6" fill="#1a1d24"/><circle cx="1596.3999999999999" cy="661" r="1.6" fill="#1a1d24"/>
<g fill="none" stroke="#66727e" stroke-width="1.9"><circle cx="471" cy="715" r="10"/><path d="M465.5 715 H476.5 M471 709.5 V720.5"/></g>
<rect x="1465" y="707.5" width="21.5" height="15.5" rx="4" fill="#1a1d24"/><path d="M1473 711 L1479.5 715 L1473 719 Z" fill="#fff"/>
<rect x="1502.8" y="705" width="20" height="19.5" rx="1.8" fill="#1a1d24"/><path d="M1505.8 720.5 L1510.8 715.5 L1513.8 718 L1516.3 715 L1519.8 720.5 Z" fill="#fff"/>
<g fill="none" stroke="#66727e" stroke-width="1.9"><circle cx="471" cy="768" r="10"/><path d="M465.5 768 H476.5 M471 762.5 V773.5"/></g>
<rect x="1465" y="760.5" width="21.5" height="15.5" rx="4" fill="#1a1d24"/><path d="M1473 764 L1479.5 768 L1473 772 Z" fill="#fff"/>
<rect x="1502.8" y="758" width="20" height="19.5" rx="1.8" fill="#1a1d24"/><path d="M1505.8 773.5 L1510.8 768.5 L1513.8 771 L1516.3 768 L1519.8 773.5 Z" fill="#fff"/>
<path d="M1550.6 758 L1553.1999999999998 765.4 L1560.8 765.4 L1554.6 770 L1556.8999999999999 777.5 L1550.6 772.8 L1544.3 777.5 L1546.6 770 L1540.3999999999999 765.4 L1548.0 765.4 Z" fill="#1a1d24"/>
<g fill="#1a1d24"><rect x="1578.3999999999999" y="760" width="20" height="2.2"/><rect x="1578.3999999999999" y="764.2" width="20" height="2.2"/><rect x="1578.3999999999999" y="768.4" width="20" height="2.2"/><rect x="1578.3999999999999" y="772.6" width="20" height="2.2"/></g>
<path d="M1682.5 764.5 L1686.5 770.5 L1678.5 770.5 Z" fill="#1f7a47"/>
<g fill="none" stroke="#66727e" stroke-width="1.9"><circle cx="471" cy="822" r="10"/><path d="M465.5 822 H476.5 M471 816.5 V827.5"/></g>
<rect x="1465" y="812" width="20" height="19.5" rx="1.8" fill="#1a1d24"/><path d="M1468 827.5 L1473 822.5 L1476 825 L1478.5 822 L1482 827.5 Z" fill="#fff"/>
<path d="M1512.8 812 L1515.3999999999999 819.4 L1523.0 819.4 L1516.8 824 L1519.1 831.5 L1512.8 826.8 L1506.5 831.5 L1508.8 824 L1502.6 819.4 L1510.2 819.4 Z" fill="#1a1d24"/>
<g fill="#1a1d24"><rect x="1540.6" y="814" width="20" height="2.2"/><rect x="1540.6" y="818.2" width="20" height="2.2"/><rect x="1540.6" y="822.4" width="20" height="2.2"/><rect x="1540.6" y="826.6" width="20" height="2.2"/></g>
<g fill="none" stroke="#66727e" stroke-width="1.9"><circle cx="471" cy="876" r="10"/><path d="M465.5 876 H476.5 M471 870.5 V881.5"/></g>
<rect x="1465" y="868.5" width="21.5" height="15.5" rx="4" fill="#1a1d24"/><path d="M1473 872 L1479.5 876 L1473 880 Z" fill="#fff"/>
<path d="M1512.8 866 L1515.3999999999999 873.4 L1523.0 873.4 L1516.8 878 L1519.1 885.5 L1512.8 880.8 L1506.5 885.5 L1508.8 878 L1502.6 873.4 L1510.2 873.4 Z" fill="#1a1d24"/>
<g fill="#1a1d24"><rect x="1540.6" y="868" width="20" height="2.2"/><rect x="1540.6" y="872.2" width="20" height="2.2"/><rect x="1540.6" y="876.4" width="20" height="2.2"/><rect x="1540.6" y="880.6" width="20" height="2.2"/></g>
<g fill="none" stroke="#1a1d24" stroke-width="2"><circle cx="1588.3999999999999" cy="870.5" r="3.3"/><circle cx="1582.3999999999999" cy="881" r="3.3"/><circle cx="1594.3999999999999" cy="881" r="3.3"/></g>
<path d="M1682.5 872.5 L1686.5 878.5 L1678.5 878.5 Z" fill="#1f7a47"/>
<g fill="none" stroke="#66727e" stroke-width="1.9"><circle cx="471" cy="929" r="10"/><path d="M465.5 929 H476.5 M471 923.5 V934.5"/></g>
<g fill="#1a1d24"><rect x="1465" y="921" width="20" height="2.2"/><rect x="1465" y="925.2" width="20" height="2.2"/><rect x="1465" y="929.4" width="20" height="2.2"/><rect x="1465" y="933.6" width="20" height="2.2"/></g>
<rect x="1502.8" y="921.5" width="21.5" height="15.5" rx="4" fill="#1a1d24"/><path d="M1510.8 925 L1517.3 929 L1510.8 933 Z" fill="#fff"/>
<g fill="none" stroke="#1a1d24" stroke-width="2"><path d="M1541.6 924 V939 H1556.6"/><rect x="1545.6" y="918" width="17" height="17" rx="1.5"/></g><text x="1554.1" y="931" font-family="Liberation Sans" font-weight="bold" font-size="12" text-anchor="middle" fill="#1a1d24">?</text>
<rect x="1579.3999999999999" y="917.5" width="23" height="23" rx="4" fill="#fff" stroke="#d6d9e4" stroke-width="2"/><circle cx="1585.3999999999999" cy="929" r="1.6" fill="#1a1d24"/><circle cx="1590.8999999999999" cy="929" r="1.6" fill="#1a1d24"/><circle cx="1596.3999999999999" cy="929" r="1.6" fill="#1a1d24"/>
<path d="M1682.5 925.5 L1686.5 931.5 L1678.5 931.5 Z" fill="#1f7a47"/>
<g fill="none" stroke="#66727e" stroke-width="1.9"><circle cx="471" cy="983" r="10"/><path d="M465.5 983 H476.5 M471 977.5 V988.5"/></g>
<g fill="#1a1d24"><rect x="1465" y="975" width="20" height="2.2"/><rect x="1465" y="979.2" width="20" height="2.2"/><rect x="1465" y="983.4" width="20" height="2.2"/><rect x="1465" y="987.6" width="20" height="2.2"/></g>
<path d="M1512.8 973 L1515.3999999999999 980.4 L1523.0 980.4 L1516.8 985 L1519.1 992.5 L1512.8 987.8 L1506.5 992.5 L1508.8 985 L1502.6 980.4 L1510.2 980.4 Z" fill="#1a1d24"/>
<g fill="#1a1d24"><rect x="1540.6" y="975" width="20" height="2.2"/><rect x="1540.6" y="979.2" width="20" height="2.2"/><rect x="1540.6" y="983.4" width="20" height="2.2"/><rect x="1540.6" y="987.6" width="20" height="2.2"/></g>
</svg>
<div class="a" style="left:2015px;top:520px;width:25px;height:460px;background:#f1f2f6"></div>
<div class="a" style="left:2040px;top:0;width:8px;height:980px;background:#e1e2e6"></div><div class="a" style="left:2041px;top:219px;width:6px;height:213px;border-radius:3px;background:#a3a4aa"></div>

<!-- ===== SEARCH INTENT SELECT ===== -->
<div class="a" style="left:427.5px;top:274px;width:238.5px;height:46px;background:#d6d9e4;border-radius:6px 6px 0 0"></div>
<div class="a" style="left:435px;top:282px;width:64px;height:29.5px;border-radius:15px;background:#1b1f29"></div>
<div class="a" style="left:454.5px;top:290px;color:#d5d8df;font-size:15px;line-height:15px">1</div>
<svg style="left:0;top:0" width="2048" height="700" fill="none" stroke-linecap="round" stroke-linejoin="round">
  <path d="M478.5 291.5 L489 302 M489 291.5 L478.5 302" stroke="#fff" stroke-width="2"/>
  <path d="M636.8 300.5 L641.8 295.5 L646.8 300.5" stroke="#1f2329" stroke-width="2.1"/>
</svg>
<div class="a" style="left:506.5px;top:289.5px;color:#1f2329;font-size:18px;line-height:18px;-webkit-text-stroke:0.3px #1f2329">Selected</div>
<div class="a" style="left:653.5px;top:261px;width:26px;height:26px;border-radius:50%;background:#fff;border:1px solid #e0e3ea"></div>
<svg style="left:0;top:0" width="2048" height="700" fill="none" stroke="#2b313b" stroke-width="2" stroke-linecap="round">
  <path d="M661.5 268.5 L671.5 278.5 M671.5 268.5 L661.5 278.5"/>
</svg>
<!-- dropdown -->
<div class="a" style="left:426px;top:320px;width:245px;height:312px;box-shadow:0 4px 5px -1px rgba(20,30,60,0.18)"></div>
<div class="a" style="left:426px;top:320px;width:246px;height:312px;background:#fff;border:4px solid #ff2a0a;border-right-width:5px;border-radius:2px 2px 4px 4px"></div>
<div class="a" style="left:430px;top:375px;width:236px;height:1.5px;background:#e9ebf0"></div>
<div class="a" style="left:451px;top:339px;width:19px;height:19px;border-radius:2.5px;background:#1b1f29"></div>
<div class="a" style="left:455px;top:347.2px;width:11px;height:2.6px;background:#fff"></div>
<div class="a" style="left:451px;top:391.5px;width:19px;height:19px;border-radius:2.5px;background:#1b1f29"></div>
<svg style="left:0;top:0" width="2048" height="700" fill="none" stroke="#fff" stroke-width="2.4" stroke-linecap="round" stroke-linejoin="round"><path d="M454.5 401 L458.5 405 L466.5 396.5"/></svg>
<div class="a" style="left:451px;top:442.5px;width:19px;height:19px;border-radius:2.5px;border:2.4px solid #1b1f29"></div>
<div class="a" style="left:451px;top:494px;width:19px;height:19px;border-radius:2.5px;border:2.4px solid #1b1f29"></div>
<div class="a" style="left:451px;top:545.5px;width:19px;height:19px;border-radius:2.5px;border:2.4px solid #1b1f29"></div>
<div class="a" style="left:451px;top:597px;width:19px;height:19px;border-radius:2.5px;border:2.4px solid #1b1f29"></div>
<div class="a" style="left:486.5px;top:339.5px;color:#1f2329;font-size:18px;line-height:18px;letter-spacing:0.5px">Select All</div>
<div class="a" style="left:486.5px;top:392.5px;color:#1f2329;font-size:18px;line-height:18px;letter-spacing:0.5px">Informational</div>
<div class="a" style="left:486.5px;top:443.5px;color:#1f2329;font-size:18px;line-height:18px;letter-spacing:0.5px">Navigational</div>
<div class="a" style="left:486.5px;top:495px;color:#1f2329;font-size:18px;line-height:18px;letter-spacing:0.5px">Transactional</div>
<div class="a" style="left:486.5px;top:546.5px;color:#1f2329;font-size:18px;line-height:18px;letter-spacing:0.5px">Commercial</div>
<div class="a" style="left:486.5px;top:598px;color:#1f2329;font-size:18px;line-height:18px;letter-spacing:0.5px">Local</div>

<!-- chat -->
<div class="a" style="left:1933.6px;top:845.7px;width:76.5px;height:76.5px;border-radius:50%;background:#1b74d4;box-shadow:0 3px 10px rgba(0,0,0,0.18)"></div>
<svg style="left:0;top:0" width="2048" height="980">
  <path d="M1959.5 867 Q1960 864.5 1963 864.5 L1987.5 865.5 Q1991 866 1990.8 869.5 L1989.5 889 Q1989 890 1988 890" fill="none" stroke="#fff" stroke-width="2"/>
  <path d="M1956.5 870.5 H1981.5 Q1985.5 870.5 1985.5 874.5 V892 Q1985.5 896 1981.5 896.5 L1972 897.5 L1969 902.5 L1966 897.5 L1957 897 Q1953 896.5 1953 892.5 V874.5 Q1953 870.5 1956.5 870.5 Z" fill="#fff"/>
</svg>
<!-- bottom fade -->
<div class="a" style="left:376px;top:935px;width:1664px;height:45px;background:linear-gradient(to bottom,rgba(40,50,70,0),rgba(40,50,70,0.025) 50%,rgba(40,50,70,0.08))"></div>

</body></html>
